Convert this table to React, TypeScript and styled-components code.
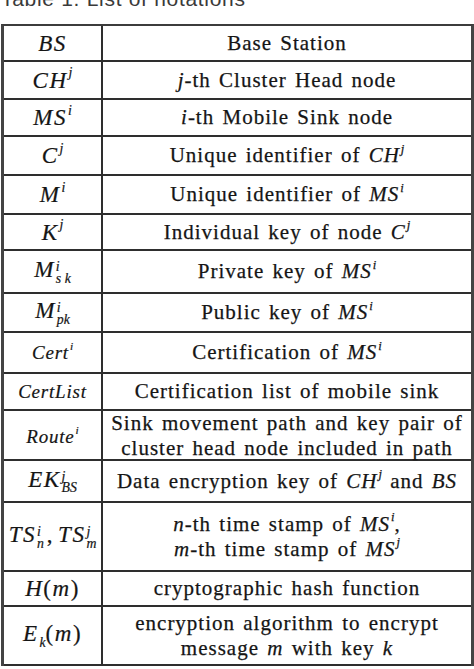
import React from 'react';
import styled, { createGlobalStyle } from 'styled-components';

const GlobalStyle = createGlobalStyle`
  html, body {
    margin: 0;
    padding: 0;
    background: #ffffff;
  }
  body {
    width: 474px;
    height: 669px;
    overflow: hidden;
  }
`;

const serif = `'Liberation Serif', 'Times New Roman', serif`;

const Page = styled.div`
  width: 474px;
  height: 669px;
  display: flex;
  flex-direction: column;
  background: #ffffff;
`;

const Caption = styled.div`
  font-family: 'Liberation Sans', Arial, sans-serif;
  font-size: 21px;
  line-height: 21px;
  color: #3a3a3a;
  margin-top: -12px;
  margin-left: 1px;
  height: 36px;
  letter-spacing: 0.7px;
`;

const Table = styled.div`
  box-sizing: border-box;
  width: 473px;
  margin-left: 1px;
  border-top: 2px solid #3c3c3c;
  border-left: 3px solid #444;
  border-right: 3px solid #444;
  display: flex;
  flex-direction: column;
`;

const Row = styled.div<{ $h: number }>`
  box-sizing: border-box;
  height: ${(p) => p.$h}px;
  display: grid;
  grid-template-columns: 99px 1fr;
  border-bottom: 2px solid #2e2e2e;
`;

const SymbolCell = styled.div<{ $small?: boolean }>`
  border-right: 2px solid #2e2e2e;
  display: flex;
  align-items: center;
  justify-content: center;
  font-family: ${serif};
  font-style: italic;
  font-size: ${(p) => (p.$small ? 19 : 23)}px;
  letter-spacing: ${(p) => (p.$small ? 0.8 : 1.5)}px;
  color: #151515;
  -webkit-text-stroke: 0.2px #151515;
`;

const Formula = styled.span`
  white-space: nowrap;
  line-height: 1;
`;

const DescCell = styled.div`
  display: flex;
  flex-direction: column;
  align-items: center;
  justify-content: center;
  font-family: ${serif};
  font-size: 21px;
  line-height: 25px;
  letter-spacing: 1px;
  word-spacing: 2px;
  color: #151515;
  -webkit-text-stroke: 0.25px #151515;
  text-align: center;
`;

const Line = styled.span`
  white-space: nowrap;
`;

const Mi = styled.span`
  font-family: ${serif};
  font-style: italic;
  letter-spacing: 1px;
`;

const Sup = styled.span`
  font-size: 0.6em;
  vertical-align: 0.75em;
  line-height: 0;
  margin-left: 1px;
  letter-spacing: 0;
`;

const Scripts = styled.span`
  display: inline-flex;
  flex-direction: column;
  align-items: flex-start;
  vertical-align: 0.45em;
  font-size: 0.6em;
  line-height: 0.85;
  letter-spacing: 0;
  margin-left: 1px;
`;

const Upright = styled.span`
  font-style: normal;
`;

const Comma = styled.span`
  font-style: normal;
  margin: 0 4px 0 3px;
`;

function SupSub({ sup, sub }: { sup: string; sub: string }) {
  return (
    <Scripts>
      <span>{sup || '\u00a0'}</span>
      <span>{sub}</span>
    </Scripts>
  );
}

function Sym({ children, small }: { children: React.ReactNode; small?: boolean }) {
  return (
    <SymbolCell $small={small}>
      <Formula>{children}</Formula>
    </SymbolCell>
  );
}

function App() {
  return (
    <Page>
      <GlobalStyle />
      <Caption>Table 1. List of notations</Caption>
      <Table>
        <Row $h={36}>
          <Sym>BS</Sym>
          <DescCell>Base Station</DescCell>
        </Row>
        <Row $h={38}>
          <Sym>
            CH<Sup>j</Sup>
          </Sym>
          <DescCell>
            <Line>
              <Mi>j</Mi>-th Cluster Head node
            </Line>
          </DescCell>
        </Row>
        <Row $h={37}>
          <Sym>
            MS<Sup>i</Sup>
          </Sym>
          <DescCell>
            <Line>
              <Mi>i</Mi>-th Mobile Sink node
            </Line>
          </DescCell>
        </Row>
        <Row $h={39}>
          <Sym>
            C<Sup>j</Sup>
          </Sym>
          <DescCell>
            <Line>
              Unique identifier of{' '}
              <Mi>
                CH<Sup>j</Sup>
              </Mi>
            </Line>
          </DescCell>
        </Row>
        <Row $h={39}>
          <Sym>
            M<Sup>i</Sup>
          </Sym>
          <DescCell>
            <Line>
              Unique identifier of{' '}
              <Mi>
                MS<Sup>i</Sup>
              </Mi>
            </Line>
          </DescCell>
        </Row>
        <Row $h={36}>
          <Sym>
            K<Sup>j</Sup>
          </Sym>
          <DescCell>
            <Line>
              Individual key of node{' '}
              <Mi>
                C<Sup>j</Sup>
              </Mi>
            </Line>
          </DescCell>
        </Row>
        <Row $h={43}>
          <Sym>
            M<SupSub sup="i" sub="s k" />
          </Sym>
          <DescCell>
            <Line>
              Private key of{' '}
              <Mi>
                MS<Sup>i</Sup>
              </Mi>
            </Line>
          </DescCell>
        </Row>
        <Row $h={39}>
          <Sym>
            M<SupSub sup="i" sub="pk" />
          </Sym>
          <DescCell>
            <Line>
              Public key of{' '}
              <Mi>
                MS<Sup>i</Sup>
              </Mi>
            </Line>
          </DescCell>
        </Row>
        <Row $h={41}>
          <Sym small>
            Cert<Sup>i</Sup>
          </Sym>
          <DescCell>
            <Line>
              Certification of{' '}
              <Mi>
                MS<Sup>i</Sup>
              </Mi>
            </Line>
          </DescCell>
        </Row>
        <Row $h={37}>
          <Sym small>CertList</Sym>
          <DescCell>
            <Line>Certification list of mobile sink</Line>
          </DescCell>
        </Row>
        <Row $h={50}>
          <Sym small>
            Route<Sup>i</Sup>
          </Sym>
          <DescCell>
            <Line>Sink movement path and key pair of</Line>
            <Line>cluster head node included in path</Line>
          </DescCell>
        </Row>
        <Row $h={42}>
          <Sym>
            EK<SupSub sup="j" sub="BS" />
          </Sym>
          <DescCell>
            <Line>
              Data encryption key of{' '}
              <Mi>
                CH<Sup>j</Sup>
              </Mi>{' '}
              and <Mi>BS</Mi>
            </Line>
          </DescCell>
        </Row>
        <Row $h={69}>
          <Sym>
            TS<SupSub sup="i" sub="n" />
            <Comma>,</Comma>TS<SupSub sup="j" sub="m" />
          </Sym>
          <DescCell>
            <Line>
              <Mi>n</Mi>-th time stamp of{' '}
              <Mi>
                MS<Sup>i</Sup>
              </Mi>
              ,
            </Line>
            <Line>
              <Mi>m</Mi>-th time stamp of{' '}
              <Mi>
                MS<Sup>j</Sup>
              </Mi>
            </Line>
          </DescCell>
        </Row>
        <Row $h={35}>
          <Sym>
            H<Upright>(</Upright>m<Upright>)</Upright>
          </Sym>
          <DescCell>
            <Line>cryptographic hash function</Line>
          </DescCell>
        </Row>
        <Row $h={59}>
          <Sym>
            E<SupSub sup="" sub="k" />
            <Upright>(</Upright>m<Upright>)</Upright>
          </Sym>
          <DescCell>
            <Line>encryption algorithm to encrypt</Line>
            <Line>
              message <Mi>m</Mi> with key <Mi>k</Mi>
            </Line>
          </DescCell>
        </Row>
      </Table>
    </Page>
  );
}

export default App;
